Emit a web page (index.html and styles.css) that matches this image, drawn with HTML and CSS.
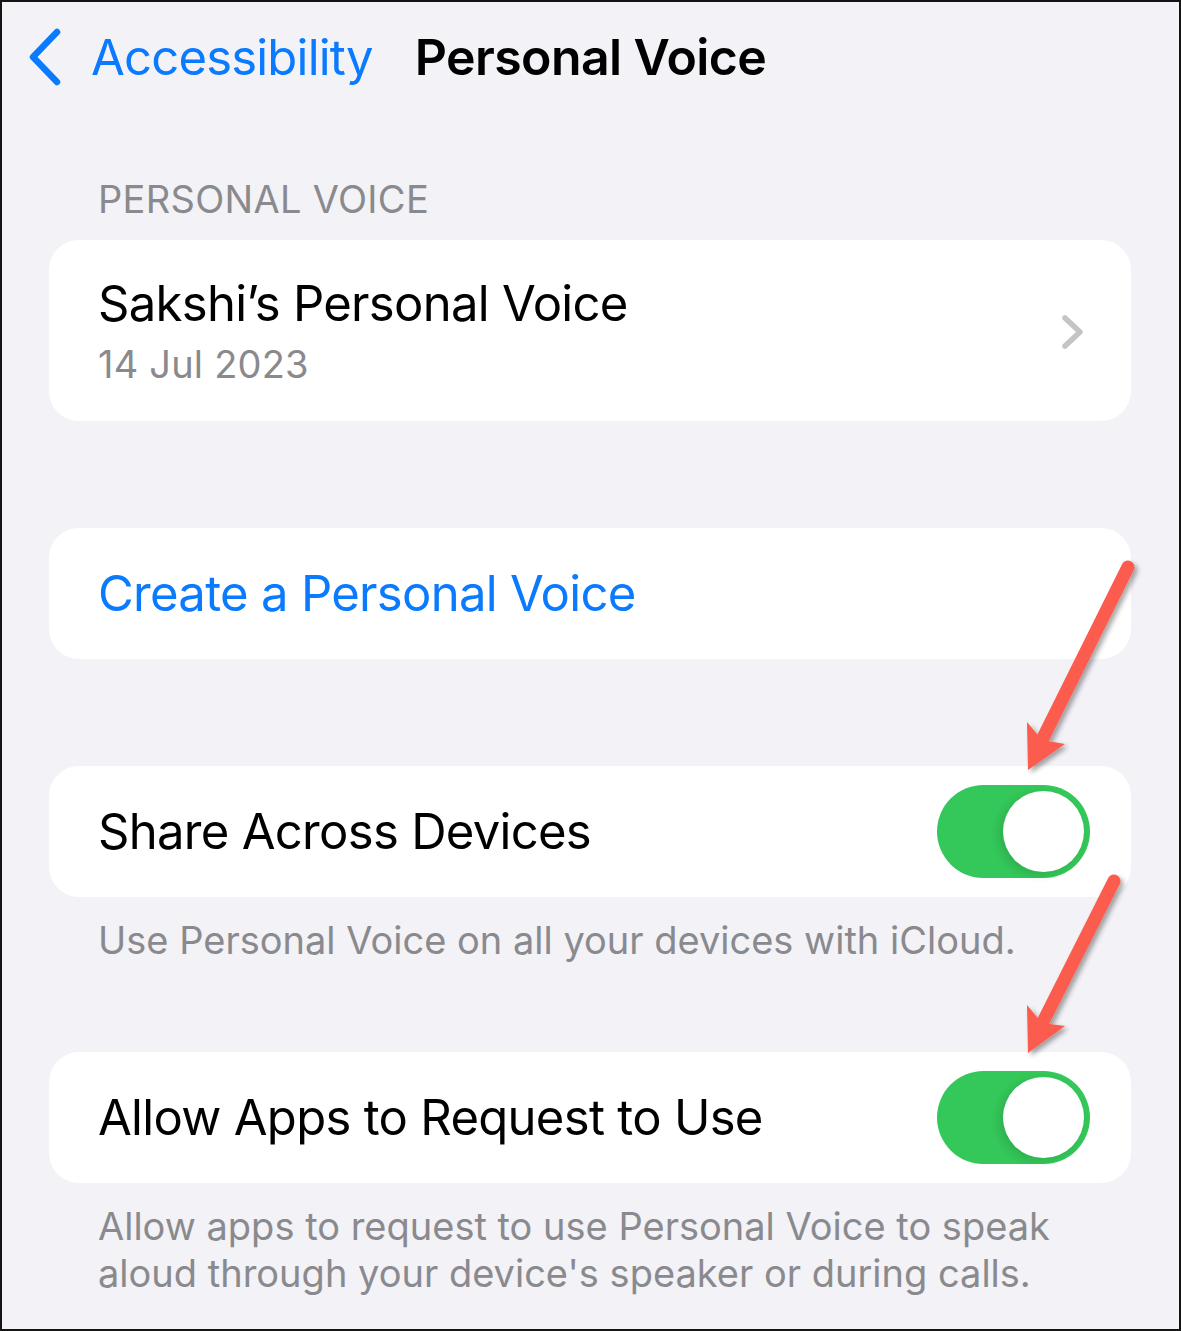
FILE: index.html
```html
<!DOCTYPE html>
<html lang="en">
<head>
  <meta charset="UTF-8">
  <meta name="viewport" content="width=device-width, initial-scale=1.0">
  <title>Personal Voice</title>
  <link rel="stylesheet" href="styles.css">
</head>
<body>
  <div class="screen">
    <header class="nav">
      <a href="#" class="back">
        <svg class="back-icon" width="34" height="58" viewBox="0 0 34 58">
          <polyline points="29,4 5,29 29,54" fill="none" stroke="currentColor" stroke-width="6.5" stroke-linecap="round" stroke-linejoin="round"/>
        </svg>
        <span>Accessibility</span>
      </a>
      <h1 class="title">Personal Voice</h1>
    </header>

    <main class="content">
      <h2 class="section-header">PERSONAL VOICE</h2>
      <div class="card voice-row">
        <div class="voice-info">
          <div class="row-label">Sakshi’s Personal Voice</div>
          <div class="row-sub">14 Jul 2023</div>
        </div>
        <svg class="chevron" width="24" height="36" viewBox="0 0 24 36">
          <polyline points="4,4 19,18 4,32" fill="none" stroke="#c4c4c7" stroke-width="5.5" stroke-linecap="round" stroke-linejoin="round"/>
        </svg>
      </div>

      <div class="card row create">
        <span class="row-label link">Create a Personal Voice</span>
      </div>

      <div class="card row share">
        <span class="row-label">Share Across Devices</span>
        <span class="switch on"><span class="thumb"></span></span>
      </div>
      <p class="footer">Use Personal Voice on all your devices with iCloud.</p>

      <div class="card row allow">
        <span class="row-label">Allow Apps to Request to Use</span>
        <span class="switch on"><span class="thumb"></span></span>
      </div>
      <p class="footer">Allow apps to request to use Personal Voice to speak aloud through your device's speaker or during calls.</p>
    </main>

    <!-- callout arrows pointing at the two switches -->
    <svg class="callouts" width="1177" height="1327" viewBox="2 2 1177 1327">
      <defs>
        <filter id="arrow-shadow" x="-20%" y="-20%" width="140%" height="140%">
          <feDropShadow dx="3" dy="3" stdDeviation="2.5" flood-color="#000" flood-opacity="0.35"/>
        </filter>
      </defs>
      <g fill="#fc5b4d" stroke="#fc5b4d" filter="url(#arrow-shadow)">
        <line x1="1128" y1="567" x2="1043" y2="738" stroke-width="13" stroke-linecap="round"/>
        <polygon points="1028,770 1027,722 1042,740 1065,744" stroke="none"/>
        <line x1="1114" y1="881" x2="1043" y2="1022" stroke-width="13" stroke-linecap="round"/>
        <polygon points="1028,1053 1027,1005 1042,1023 1065,1026" stroke="none"/>
      </g>
    </svg>
  </div>
</body>
</html>
```

FILE: styles.css
```css
* {
  box-sizing: border-box;
}

body {
  margin: 0;
  font-family: Inter, 'Noto Sans', sans-serif;
  background-color: #fff;
}

.screen {
  position: relative;
  width: 1181px;
  height: 1331px;
  border: 2px solid #141414;
  background-color: #f2f2f7;
  overflow: hidden;
}

/* navigation bar */
.nav {
  position: relative;
  height: 110px;
  display: flex;
  align-items: center;
  padding-left: 26px;
}

.back {
  display: flex;
  align-items: center;
  gap: 29px;
  color: #0a7aff;
  text-decoration: none;
  font-size: 49px;
  letter-spacing: -0.8px;
}

.back-icon {
  display: block;
}

.title {
  position: absolute;
  left: 0;
  right: 0;
  top: 0;
  bottom: 0;
  margin: 0;
  display: flex;
  align-items: center;
  justify-content: center;
  font-size: 50px;
  font-weight: 600;
  letter-spacing: -0.6px;
  color: #000;
  pointer-events: none;
}

/* grouped list */
.content {
  padding: 0 48px 0 47px;
}

.section-header {
  margin: 64px 0 18px 49px;
  font-size: 38px;
  font-weight: 400;
  letter-spacing: 0.3px;
  color: #8a8a8e;
  line-height: 46px;
}

.card {
  background-color: #fff;
  border-radius: 30px;
}

.row {
  height: 131px;
  display: flex;
  align-items: center;
  justify-content: space-between;
  padding: 0 41px 0 49px;
}

.row-label {
  font-size: 49px;
  letter-spacing: -0.7px;
  color: #000;
}

.link {
  color: #0a7aff;
}

.voice-row {
  height: 181px;
  display: flex;
  align-items: center;
  justify-content: space-between;
  padding: 0 46px 0 49px;
}

.voice-info {
  display: flex;
  flex-direction: column;
  gap: 7px;
}

.voice-info .row-label {
  line-height: 60px;
}

.row-sub {
  font-size: 38px;
  letter-spacing: 0.2px;
  line-height: 46px;
  color: #8a8a8e;
}

.chevron {
  display: block;
  margin-top: 2px;
}

.create {
  margin-top: 107px;
}

.share {
  margin-top: 107px;
}

.footer {
  margin: 20px 0 0 49px;
  padding-right: 40px;
  font-size: 38px;
  line-height: 47px;
  color: #8a8a8e;
  min-height: 135px;
}

.footer:last-child {
  min-height: 0;
}

/* toggle switch */
.switch {
  width: 153px;
  height: 93px;
  border-radius: 47px;
  background-color: #e9e9ea;
  display: flex;
  align-items: center;
  padding: 6px;
}

.switch.on {
  background-color: #34c759;
  justify-content: flex-end;
}

.thumb {
  width: 81px;
  height: 81px;
  border-radius: 50%;
  background-color: #fff;
  box-shadow: -4px 3px 10px rgba(0, 0, 0, 0.12);
}

.callouts {
  position: absolute;
  left: 0;
  top: 0;
  pointer-events: none;
}
```
